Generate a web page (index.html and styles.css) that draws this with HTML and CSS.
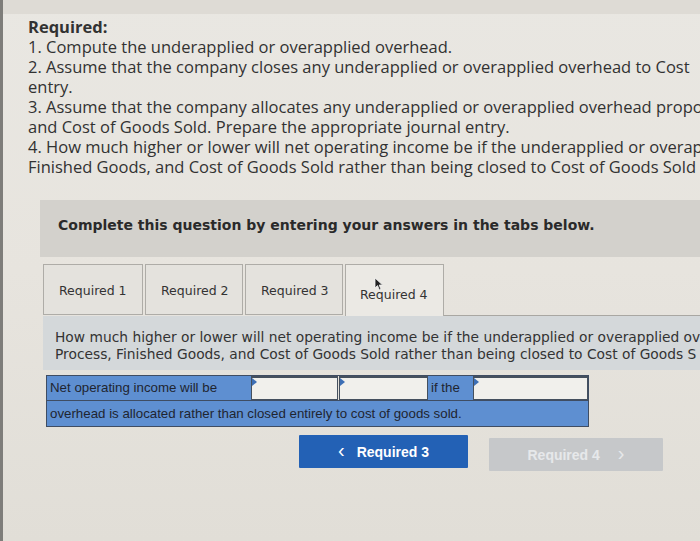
FILE: index.html
```html
<!DOCTYPE html>
<html>
<head>
<meta charset="utf-8">
<link rel="stylesheet" href="styles.css">
</head>
<body>
<div class="screen">
  <div class="topband"></div>
  <section class="req">
    <div class="line strong">Required:</div>
    <div class="line">1. Compute the underapplied or overapplied overhead.</div>
    <div class="line">2. Assume that the company closes any underapplied or overapplied overhead to Cost</div>
    <div class="line">entry.</div>
    <div class="line">3. Assume that the company allocates any underapplied or overapplied overhead propo</div>
    <div class="line">and Cost of Goods Sold. Prepare the appropriate journal entry.</div>
    <div class="line">4. How much higher or lower will net operating income be if the underapplied or overap</div>
    <div class="line">Finished Goods, and Cost of Goods Sold rather than being closed to Cost of Goods Sold</div>
  </section>

  <div class="instr">Complete this question by entering your answers in the tabs below.</div>

  <div class="tabs">
    <div class="tab">Required 1</div>
    <div class="tab">Required 2</div>
    <div class="tab">Required 3</div>
    <div class="tab active">Required 4
      <svg class="cursor" width="10" height="14" viewBox="0 0 10 14"><path d="M1 1 L1 11 L3.5 8.6 L5.4 13 L7 12.3 L5.2 8 L8.6 8 Z" fill="#222" stroke="#f4f4f4" stroke-width="0.8"/></svg>
    </div>
    <div class="tabfill"></div>
  </div>

  <div class="tabbody">
    <div class="question">
      <div class="qline">How much higher or lower will net operating income be if the underapplied or overapplied ov</div>
      <div class="qline">Process, Finished Goods, and Cost of Goods Sold rather than being closed to Cost of Goods S</div>
    </div>

    <div class="answer">
      <div class="row">
        <div class="cell label c1">Net operating income will be</div>
        <div class="cell input c2"></div>
        <div class="cell input c3"></div>
        <div class="cell label c4">if the</div>
        <div class="cell input c5"></div>
      </div>
      <div class="row">
        <div class="cell label full">overhead is allocated rather than closed entirely to cost of goods sold.</div>
      </div>
    </div>

    <div class="nav">
      <div class="btn prev"><span class="chev">&lsaquo;</span>Required 3</div>
      <div class="btn next">Required 4<span class="chev">&rsaquo;</span></div>
    </div>
  </div>
</div>
</body>
</html>
```

FILE: styles.css
```css
html, body {
  margin: 0;
  padding: 0;
}
body {
  width: 700px;
  height: 541px;
  overflow: hidden;
  background: #e6e3dd;
}
.screen {
  width: 697px;
  height: 541px;
  overflow: hidden;
  border-left: 3px solid #7e7d7a;
  background: linear-gradient(180deg, #e9e7e2 0%, #e7e4de 50%, #e1ded7 100%);
}
.topband {
  height: 14px;
  background: #dedbd5;
}
.req {
  padding: 3px 0 0 25px;
  font-family: "Open Sans", "Liberation Sans", sans-serif;
  font-size: 16.5px;
  line-height: 20px;
  color: #323232;
}
.line {
  white-space: nowrap;
}
.strong {
  font-weight: 700;
}

.instr {
  margin: 23px 0 0 37px;
  height: 57px;
  box-sizing: border-box;
  padding: 17px 0 0 18px;
  background: #d3d1cc;
  font-family: "DejaVu Sans", Verdana, sans-serif;
  font-weight: 700;
  font-size: 14px;
  color: #2a2a2a;
  white-space: nowrap;
}

.tabs {
  display: flex;
  align-items: flex-start;
  margin: 7px 0 0 40px;
  height: 52px;
}
.tab {
  position: relative;
  height: 51px;
  box-sizing: border-box;
  border: 1px solid #aeaca7;
  background: #e4e2dd;
  margin-right: 2px;
  padding: 18px 0 0 15px;
  font-family: "DejaVu Sans", Verdana, sans-serif;
  font-size: 12.5px;
  color: #333;
  white-space: nowrap;
}
.tab:nth-child(1) { width: 100px; }
.tab:nth-child(2) { width: 98px; }
.tab:nth-child(3) { width: 98px; }
.tab.active {
  width: 99px;
  height: 52px;
  background: #ebe9e4;
  border-bottom: none;
  padding: 22px 0 0 14px;
  margin-right: 0;
}
.cursor {
  position: absolute;
  left: 28px;
  top: 12px;
}
.tabfill {
  flex: 1;
  height: 52px;
  box-sizing: border-box;
  border-bottom: 1px solid #a9a7a2;
}

.tabbody {
  margin-left: 40px;
}
.question {
  background: #d4d8da;
  height: 54px;
  box-sizing: border-box;
  padding: 13px 0 0 12px;
  font-family: "DejaVu Sans", Verdana, sans-serif;
  font-size: 13.8px;
  line-height: 16.5px;
  color: #333;
}
.qline {
  white-space: nowrap;
}

.answer {
  margin: 5px 0 0 3px;
  width: 541px;
  border: 1px solid #3f4d63;
  font-family: "Liberation Sans", Arial, sans-serif;
  font-size: 13.3px;
  color: #1f2530;
}
.row {
  display: flex;
  height: 24px;
}
.row + .row {
  height: 25px;
  border-top: 1px solid #3f4d63;
}
.cell {
  box-sizing: border-box;
  height: 100%;
  white-space: nowrap;
}
.label {
  background: #5e8fd1;
  padding: 4px 0 0 3px;
}
.input {
  position: relative;
  background: #f1f0ec;
  border: 1px solid #45505e;
  border-top-width: 2px;
}
.input::before {
  content: "";
  position: absolute;
  left: 0;
  top: 0;
  border-top: 4px solid transparent;
  border-bottom: 4px solid transparent;
  border-left: 5px solid #3d6fb5;
}
.c1 { width: 204px; }
.c2 { width: 87px; }
.c3 { width: 89px; margin-left: 1px; }
.c4 { width: 45px; padding-left: 3px; }
.c5 { width: 115px; }
.full { width: 100%; padding-top: 5px; }

.nav {
  display: flex;
  gap: 21px;
  margin: 8px 0 0 256px;
}
.btn {
  height: 33px;
  display: flex;
  align-items: center;
  justify-content: center;
  font-family: "Liberation Sans", Arial, sans-serif;
  font-weight: 700;
  font-size: 14px;
  border-radius: 1px;
}
.btn .chev {
  font-size: 20px;
  font-weight: 400;
  line-height: 1;
  margin-top: -3px;
}
.prev {
  width: 169px;
  background: #2361b5;
  color: #ffffff;
}
.prev .chev {
  margin-right: 12px;
}
.next {
  width: 174px;
  margin-top: 3px;
  background: #c6c8ca;
  color: #e6e8ea;
}
.next .chev {
  margin-left: 18px;
}
```
